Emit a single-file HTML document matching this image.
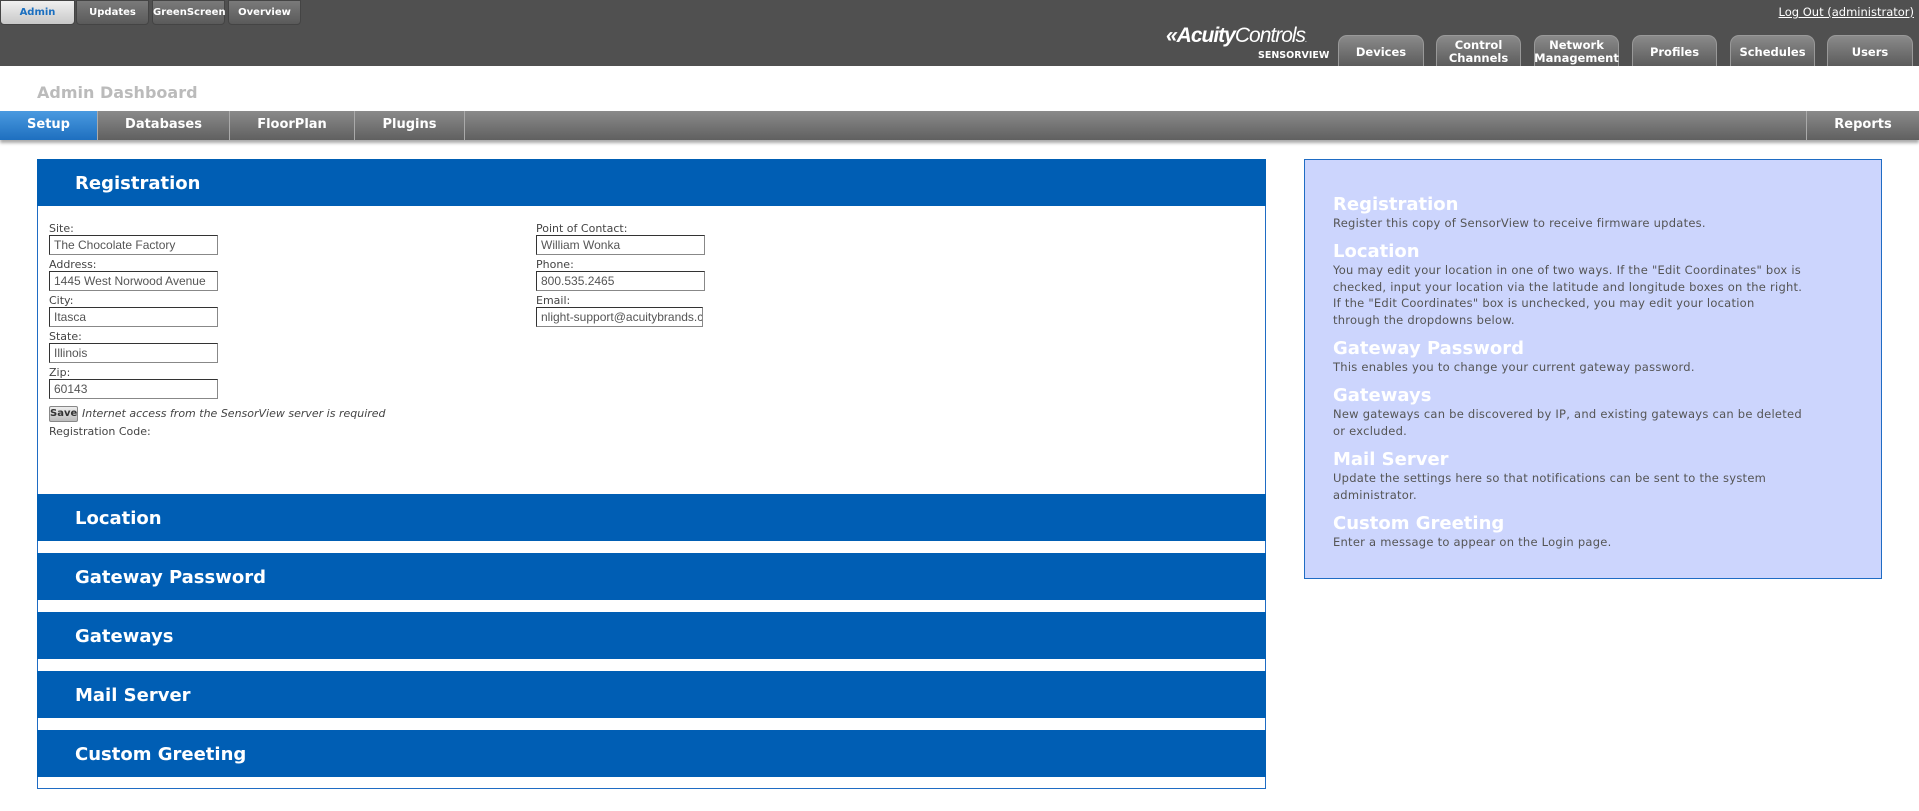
<!DOCTYPE html>
<html><head><meta charset="utf-8"><style>
*{margin:0;padding:0;box-sizing:border-box}
body{width:1919px;height:811px;background:#fff;font-family:"DejaVu Sans",Verdana,sans-serif;position:relative;overflow:hidden}
.abs{position:absolute}
#hdr{left:0;top:0;width:1919px;height:66px;background:#505050}
.tt{position:absolute;top:0;height:25px;background:linear-gradient(#7a7a7a,#5a5a5a);border:1px solid #444;border-radius:0 0 4px 4px;color:#fff;font-size:10px;font-weight:bold;text-align:center;line-height:24px}
.tt.on{background:linear-gradient(#f0f0f0,#c8c8c8);color:#1a6fc0}
.rt{position:absolute;top:35px;height:31px;background:linear-gradient(#8a8a8a,#5c5c5c);border:1px solid #999;border-bottom:none;border-radius:9px 9px 0 0;color:#fff;font-size:11.5px;font-weight:bold;text-align:center;display:flex;align-items:center;justify-content:center;line-height:13px;padding-top:2px}
#nav{left:0;top:111px;width:1919px;height:29px;background:linear-gradient(#8a8a8a,#606060);box-shadow:0 3px 3px #aaa}
.nt{position:absolute;top:0;height:29px;color:#fff;font-size:13px;font-weight:bold;text-align:center;line-height:28px;border-right:1px solid #aaa}
.sec{position:absolute;left:37px;width:1229px;height:47px;background:#005eb4;color:#fff;font-size:18px;font-weight:bold;padding-left:38px;line-height:49px}
.lbl{position:absolute;font-size:11px;color:#444}
.inp{position:absolute;width:169px;height:20px;border:1px solid #333;border-right-color:#888;border-bottom-color:#888;font-size:12px;color:#555;padding-left:4px;line-height:18px;font-family:"Liberation Sans",Arial,sans-serif;overflow:hidden;white-space:nowrap}
#rp{left:1304px;top:159px;width:578px;height:420px;background:#ccd5fd;border:1px solid #1f6cc4;padding:24px 0 0 28px}
#rp h3{color:#fff;font-size:18px;font-weight:bold;line-height:20px;margin-top:11px}
#rp p{color:#555;font-size:11.5px;line-height:16.4px;width:470px;letter-spacing:0.25px}
</style></head><body>
<div id="hdr" class="abs">
<div class="tt on" style="left:0;width:75px">Admin</div>
<div class="tt" style="left:76px;width:73px">Updates</div>
<div class="tt" style="left:152px;width:73px">GreenScreen</div>
<div class="tt" style="left:228px;width:73px">Overview</div>
<div class="abs" style="right:5px;top:5px;color:#fff;font-size:11.5px;text-decoration:underline">Log Out (administrator)</div>
<div class="abs" style="left:1166px;top:24px;color:#fff;font-size:21px;font-style:italic;letter-spacing:-1px;font-family:'Liberation Sans',Arial,sans-serif"><b>«Acuity</b>Controls<span style="font-size:8px">.</span></div>
<div class="abs" style="left:1258px;top:50px;color:#fff;font-size:9.5px;font-weight:bold">SENSORVIEW</div>
<div class="rt" style="left:1338px;width:86px">Devices</div>
<div class="rt" style="left:1436px;width:85px">Control<br>Channels</div>
<div class="rt" style="left:1534px;width:85px">Network<br>Management</div>
<div class="rt" style="left:1632px;width:85px">Profiles</div>
<div class="rt" style="left:1730px;width:85px">Schedules</div>
<div class="rt" style="left:1827px;width:86px">Users</div>
</div>
<div class="abs" style="left:37px;top:83px;color:#bbb;font-size:16px;font-weight:bold">Admin Dashboard</div>
<div id="nav" class="abs">
<div class="nt" style="left:0;width:98px;background:linear-gradient(#4a9ae0,#1e6fbf)">Setup</div>
<div class="nt" style="left:98px;width:132px">Databases</div>
<div class="nt" style="left:230px;width:125px">FloorPlan</div>
<div class="nt" style="left:355px;width:110px">Plugins</div>
<div class="nt" style="left:1806px;width:113px;border-right:none;border-left:1px solid #aaa">Reports</div>
</div>
<div class="abs" style="left:37px;top:159px;width:1229px;height:630px;border:1px solid #1f6cc4"></div>
<div class="sec" style="top:159px">Registration</div>
<div class="lbl" style="left:49px;top:222px">Site:</div><div class="inp" style="left:49px;top:235px">The Chocolate Factory</div>
<div class="lbl" style="left:49px;top:258px">Address:</div><div class="inp" style="left:49px;top:271px">1445 West Norwood Avenue</div>
<div class="lbl" style="left:49px;top:294px">City:</div><div class="inp" style="left:49px;top:307px">Itasca</div>
<div class="lbl" style="left:49px;top:330px">State:</div><div class="inp" style="left:49px;top:343px">Illinois</div>
<div class="lbl" style="left:49px;top:366px">Zip:</div><div class="inp" style="left:49px;top:379px">60143</div>
<div class="lbl" style="left:536px;top:222px">Point of Contact:</div><div class="inp" style="left:536px;top:235px">William Wonka</div>
<div class="lbl" style="left:536px;top:258px">Phone:</div><div class="inp" style="left:536px;top:271px">800.535.2465</div>
<div class="lbl" style="left:536px;top:294px">Email:</div><div class="inp" style="left:536px;top:307px;width:167px">nlight-support@acuitybrands.com</div>
<div class="abs" style="left:49px;top:406px;width:29px;height:16px;border:1px solid #888;border-radius:2px;background:linear-gradient(#eee,#bbb);font-size:10px;font-weight:bold;color:#333;text-align:center;line-height:14px">Save</div>
<div class="lbl" style="left:82px;top:407px;font-style:italic">Internet access from the SensorView server is required</div>
<div class="lbl" style="left:49px;top:425px">Registration Code:</div>
<div class="sec" style="top:494px">Location</div>
<div class="sec" style="top:553px">Gateway Password</div>
<div class="sec" style="top:612px">Gateways</div>
<div class="sec" style="top:671px">Mail Server</div>
<div class="sec" style="top:730px">Custom Greeting</div>
<div id="rp" class="abs">
<h3>Registration</h3><p>Register this copy of SensorView to receive firmware updates.</p>
<h3>Location</h3><p>You may edit your location in one of two ways. If the "Edit Coordinates" box is checked, input your location via the latitude and longitude boxes on the right. If the "Edit Coordinates" box is unchecked, you may edit your location through the dropdowns below.</p>
<h3>Gateway Password</h3><p>This enables you to change your current gateway password.</p>
<h3>Gateways</h3><p>New gateways can be discovered by IP, and existing gateways can be deleted or excluded.</p>
<h3>Mail Server</h3><p>Update the settings here so that notifications can be sent to the system administrator.</p>
<h3>Custom Greeting</h3><p>Enter a message to appear on the Login page.</p>
</div>
</body></html>
